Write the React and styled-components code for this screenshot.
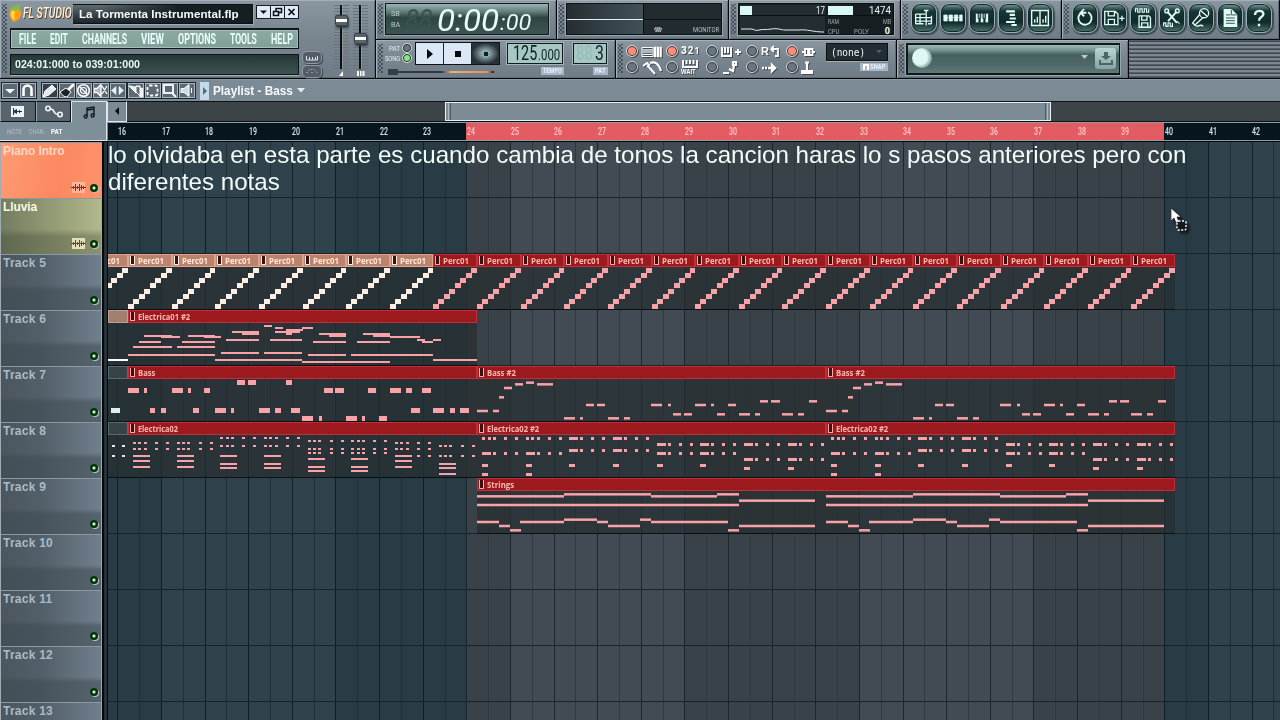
import React, { useLayoutEffect, useRef } from 'react';
import styled, { createGlobalStyle, css } from 'styled-components';

const BAR = 43.63;
const FIRST_BAR = 15;
const SEL_START = 24;
const SEL_END = 40;

// stretches or squeezes a label so that it takes exactly w pixels
const Fit = ({ w, children, ...rest }) => {
  const ref = useRef(null);
  useLayoutEffect(() => {
    const el = ref.current;
    el.style.transform = `scaleX(${w / el.offsetWidth})`;
  }, [w, children]);
  return (
    <FitBox $w={w} {...rest}>
      <FitText ref={ref}>{children}</FitText>
    </FitBox>
  );
};

const FitBox = styled.span`
  display: inline-block;
  flex: none;
  width: ${(p) => p.$w}px;
  white-space: pre;
`;

const FitText = styled.span`
  display: inline-block;
  transform-origin: 0 0;
`;

/* ---------- note data, in thirds of a pixel: [x, y, width] ---------- */

const row = (y, ...spans) => spans.map(([a, b]) => [a, y, b - a]);

const electrica01 = [
  ...row(48, [492, 516]),
  ...row(55, [525, 550], [606, 640]),
  ...row(60, [558, 610]),
  ...row(65, [395, 477], [525, 600]),
  ...row(71, [427, 477], [558, 575], [656, 738], [788, 870]),
  ...row(77, [132, 215], [264, 345], [688, 738], [820, 870]),
  ...row(81, [182, 240], [312, 362], [870, 960]),
  ...row(89, [378, 477], [510, 606], [950, 975], [1000, 1025]),
  ...row(95, [116, 182], [247, 345], [640, 738], [770, 870], [967, 1000]),
  ...row(110, [99, 215], [231, 345]),
  ...row(128, [362, 477], [492, 606]),
  ...row(134, [84, 345], [624, 738], [754, 1000]),
  ...row(150, [345, 606], [1000, 1131]),
  ...row(157, [606, 870]),
].map(([x, y, w]) => [x - 84, y, w]);

const bass = [
  ...row(49, [411, 436], [444, 468], [558, 576]),
  ...row(73, [84, 117], [132, 142], [215, 248], [263, 273], [312, 330], [672, 698], [706, 732], [804, 828], [869, 902], [918, 936], [967, 993]),
  ...row(133, [150, 166], [182, 198], [280, 297], [345, 378], [393, 402], [476, 510], [525, 543], [574, 600], [934, 960], [1000, 1032], [1050, 1066], [1081, 1107]),
  ...row(157, [606, 640], [656, 666], [738, 771], [786, 796], [836, 861]),
].map(([x, y, w]) => [x - 84, y, w]);

const bass2 = [
  ...row(135, [21, 54], [69, 87]),
  ...row(94, [87, 102]),
  ...row(66, [102, 127]),
  ...row(55, [135, 160], [201, 250]),
  ...row(50, [168, 192]),
  ...row(157, [282, 315], [331, 340], [414, 447], [462, 480]),
  ...row(117, [347, 372], [381, 405], [543, 576], [594, 603], [674, 707], [723, 732], [774, 798]),
  ...row(145, [609, 634], [642, 667], [741, 765], [806, 839], [855, 871], [936, 969], [985, 1002]),
  ...row(106, [871, 896], [904, 930], [1018, 1043]),
].map(([x, y, w]) => [x - 21, y, w]);

const electrica02Bars = [
  { dots: [62, 81], lines: [103, 117, 134] },
  { dots: [62, 81], lines: [103, 117, 134] },
  { dots: [49, 72], lines: [103, 125, 139] },
  { dots: [49, 72], lines: [103, 125, 139] },
  { dots: [58, 81, 94], lines: [112, 134, 148] },
  { dots: [58, 81, 94], lines: [112, 134, 148] },
  { dots: [62, 80, 103], lines: [103, 117, 134] },
  { dots: [72, 103], lines: [125, 139, 157] },
];
const electrica02 = electrica02Bars.flatMap(({ dots, lines }, k) => [
  ...dots.flatMap((y) => [15, 31, 47, 81, 114].map((x) => [x + k * 131, y, 8])),
  ...lines.map((y) => [15 + k * 131, y, 50]),
]);

const electrica022Bars = [
  { full: [49], wide: [94], low: [130, 157] },
  { full: [49], wide: [94], low: [130, 157] },
  { full: [], wide: [49, 85], low: [130] },
  { full: [], wide: [49, 85], low: [130] },
  { full: [], wide: [67, 94], low: [130] },
  { full: [], wide: [67, 94], low: [130] },
  { full: [], wide: [67, 112], low: [139] },
  { full: [], wide: [67, 112], low: [139] },
];
const electrica022 = electrica022Bars.flatMap(({ full, wide, low }, k) => {
  const at = k * 131;
  return [
    ...full.flatMap((y) => [15, 32, 48, 81, 114].map((x) => [x + at, y, 9])),
    ...wide.flatMap((y) => [[15 + at, y, 26], ...[48, 81, 114].map((x) => [x + at, y, 9])]),
    ...low.map((y) => [15 + at, y, 17]),
  ];
});

const stringsHalf = [
  ...row(49, [282, 543], [741, 806]),
  ...row(55, [21, 282], [543, 741]),
  ...row(68, [806, 1035]),
  ...row(81, [21, 806]),
  ...row(125, [282, 381], [511, 543]),
  ...row(132, [21, 87], [151, 282], [381, 414], [543, 774]),
  ...row(144, [87, 120], [414, 511], [806, 1035]),
  ...row(157, [120, 152], [774, 806]),
].map(([x, y, w]) => [x - 21, y, w]);
const strings = [...stringsHalf, ...stringsHalf.map(([x, y, w]) => [x + 1047, y, w])];

const perc = Array.from({ length: 8 }, (_, i) => [i * 16.35, 157 - i * 15.3, 18]);

const percClips = [
  { name: 'Perc01', bars: 1, tone: 'tan', notes: perc, h: 5, cut: 23.6 },
  ...Array.from({ length: 24 }, (_, i) => ({
    name: 'Perc01',
    bars: 1,
    tone: i < 7 ? 'tan' : 'red',
    notes: perc,
    h: 5,
  })),
];

const tail = (tone, notes, h) => ({ tone, notes, h, width: 20 });

const tracks = [
  { name: 'Piano Intro', tone: 'orange', wave: true, clips: [] },
  { name: 'Lluvia', tone: 'olive', wave: true, clips: [] },
  { name: 'Track 5', clips: percClips },
  {
    name: 'Track 6',
    clips: [tail('tanFaded', [[0, 150, 60]], 2), { name: 'Electrica01 #2', bars: 8, notes: electrica01, h: 2 }],
  },
  {
    name: 'Track 7',
    clips: [
      tail('slate', [[10, 133, 26]], 5),
      { name: 'Bass', bars: 8, notes: bass, h: 5 },
      { name: 'Bass #2', bars: 8, notes: bass2, h: 2.5 },
      { name: 'Bass #2', bars: 8, notes: bass2, h: 2.5 },
    ],
  },
  {
    name: 'Track 8',
    clips: [
      tail('slate', [[11, 72, 8], [43, 72, 8], [11, 103, 8], [43, 103, 8]], 2),
      { name: 'Electrica02', bars: 8, notes: electrica02, h: 2 },
      { name: 'Electrica02 #2', bars: 8, notes: electrica022, h: 3 },
      { name: 'Electrica02 #2', bars: 8, notes: electrica022, h: 3 },
    ],
  },
  { name: 'Track 9', clips: [{ name: 'Strings', bars: 16, notes: strings, h: 2.5, offset: 369 }] },
  { name: 'Track 10', clips: [] },
  { name: 'Track 11', clips: [] },
  { name: 'Track 12', clips: [] },
  { name: 'Track 13', clips: [] },
];

const noteColors = { tan: '#fdeee4', tanFaded: '#ffffff', slate: '#dcecf8', red: '#f9a2a7' };

const nameWidths = {
  Perc01: 26,
  Bass: 17,
  'Bass #2': 29,
  Strings: 27,
  Electrica02: 40,
  'Electrica01 #2': 52,
  'Electrica02 #2': 52,
};

const Clip = ({ clip }) => {
  const tone = clip.tone || 'red';
  const width = clip.width || clip.bars * BAR;
  // whole heights sit on the pixel grid, the others stay soft
  const snap = (y) => (Number.isInteger(clip.h) ? Math.round(y) : y);
  return (
    <ClipBox $width={width} $cut={clip.cut || 0} $offset={clip.offset || 0}>
      <ClipHead $tone={tone}>
        {clip.name && (
          <>
            <ClipMark $tone={tone} />
            <Fit w={nameWidths[clip.name]}>{clip.name}</Fit>
          </>
        )}
      </ClipHead>
      <ClipNotes width={Math.ceil(width)} height="41">
        {clip.notes.map(([x, y, w], i) => (
          <rect
            key={i}
            x={Math.round(x / 3)}
            y={snap(y / 3 - clip.h / 2) - 13}
            width={Math.max(2, Math.round(w / 3))}
            height={clip.h}
            fill={noteColors[tone]}
          />
        ))}
      </ClipNotes>
    </ClipBox>
  );
};

/* ---------- toolbar drawings ---------- */

const roundIcons = {
  playlist: <path d="M3 8h11M3 12h18M3 16h18M3 8v11M8 8v11M21 10v9M3 19h9M17 19h4M15 4v17M12.500 4h5" />,
  steps: <path d="M2 9h4v7H2zM8 9h4v7H8zM14 9h4v7h-4zM20 9h3v7h-3zM2 12h21" fill="currentColor" strokeWidth=".7" />,
  piano: <path d="M5 7h4v11H5zM10.500 7h4v11h-4zM16 7h4v11h-4zM8 7h3v6H8zM13.500 7h3v6h-3z" fill="currentColor" stroke="#14302f" strokeWidth=".9" />,
  browser: <path d="M7 5h10M11 9h6M11 13h7M7 17h10M13 20.500h6" strokeWidth="2.400" />,
  mixer: <path d="M3 4h19v17H3zM12.500 4v17M6.500 18v-4M9.500 18v-7M16 18v-4M19 18v-8" strokeWidth="1.600" />,
  undo: <path d="M7 7.500a7.500 7.500 0 1 0 9-1.500M7 6.500h7M11.500 2.500l-4 4 4 4" strokeWidth="2.100" />,
  save: (
    <>
      <path d="M2 5h12l3 3v12H2zM6 5v5h7V5M6 20v-6h7v6" />
      <path d="M18.500 13h6M21.500 10v6" />
    </>
  ),
  render: (
    <>
      <path d="M4 6V2h2.500v4H9V2h2.500v4H14V2h2.500v4H19V2" strokeWidth="1.300" />
      <path d="M8 10h11l2 2v11H8zM11 10v5h6v-5M11 23v-5h7v5" />
    </>
  ),
  scissors: (
    <>
      <path d="M7 5l11 13M18 5L8 16" strokeWidth="2.200" />
      <circle cx="6.500" cy="4.500" r="2.200" />
      <circle cx="18.500" cy="4.500" r="2.200" />
      <path d="M3 22v-4h2.500v4H8v-4h2.500v4H13v-4M18 16l3 3" strokeWidth="1.300" />
    </>
  ),
  mic: (
    <>
      <circle cx="16" cy="7" r="5.200" />
      <path d="M11 8.500L3 18l2.500 2.500L15 12M12 4l8 7M6 21c4 3 5-3 9 1" />
    </>
  ),
  doc: (
    <>
      <path d="M6 3h8l6 6v13H6z" fill="currentColor" />
      <path d="M14 3v6h6M8 9h5M8 12.500h10M8 15.500h10M8 18.500h10" stroke="#1b3d3c" strokeWidth="1" />
    </>
  ),
  help: <path d="M8 9c0-6 9.500-6 9.500-1 0 4-5 3-5 7.500M12.500 19v3" strokeWidth="2.700" />,
};

const RoundIcon = ({ name }) => (
  <RoundButton>
    <svg width="22" height="22" viewBox="0 0 25 25" fill="none" stroke="currentColor" strokeWidth="1.500">
      {roundIcons[name]}
    </svg>
  </RoundButton>
);

const toolIcons = {
  menu: <path d="M4 7h10l-5 4.500z" fill="#fff" stroke="none" />,
  magnet: <path d="M4.500 14V7.500a4 4 0 0 1 8 0V14" strokeWidth="2.600" />,
  pencil: <path d="M2 15l2-6 7-6 4 4-7 6zM9 4l4 4" fill="#dfe9ef" strokeWidth="1" />,
  brush: (
    <>
      <path d="M10 8l6-6" strokeWidth="2.800" />
      <path d="M2 10l6-4 5 4-4 5c-3 0-5-2-7-5z" fill="#1c2329" strokeWidth="1" />
    </>
  ),
  mute: (
    <>
      <circle cx="8.500" cy="8.500" r="5.800" strokeWidth="1.600" />
      <circle cx="8.500" cy="8.500" r="3" strokeWidth="1.200" />
      <path d="M5 5l7 7" strokeWidth="1.200" />
    </>
  ),
  silence: <path d="M2 6.500h3l4-4v12l-4-4H2zM10 4l5 8M15 4l-5 8" fill="#aab5bd" strokeWidth="1.300" />,
  slip: <path d="M7 4.500v8L2.500 8.500zM10 4.500v8l4.500-4z" fill="#e7eff4" strokeWidth=".5" />,
  slice: <path d="M1 3l8 8V4h4v11l3 1V6M9 10l5 5" fill="#e7eff4" strokeWidth="1" />,
  select: <rect x="3.500" y="3.500" width="10" height="10" rx="2" strokeWidth="1.800" strokeDasharray="3 2" />,
  zoom: (
    <>
      <rect x="3" y="3" width="9" height="8" strokeWidth="1.800" />
      <path d="M11 11l4 4" strokeWidth="2" />
    </>
  ),
  listen: <path d="M3 6.500h3l5-4v12l-5-4H3zM13.500 6v5" fill="#cfd9e0" strokeWidth="1" />,
};

const ToolIcon = ({ name, active }) => (
  <ToolButton $active={active}>
    <svg width="17" height="17" viewBox="0 0 17 17" fill="none" stroke="#fff">
      {toolIcons[name]}
    </svg>
  </ToolButton>
);

const optionIcons = [
  [
    true,
    <path d="M1 3.500h11v9H1zM2 6h9M2 8h9M2 10.500h9" key="a" />,
    <path d="M13 3h2v10h-2zM16 3h2v10h-2zM19 3h1.500v10H19z" fill="#fff" strokeWidth=".6" key="b" />,
  ],
  [true, null],
  [false, <path d="M1 3v9h9V3M4 3v6M7 3v6M14 8h6M17 5v6" strokeWidth="1.900" key="a" />],
  [false, <path d="M12 6h7v7h-3M12 6l3-3M12 6l3 3" strokeWidth="1.800" key="a" />],
  [true, <path d="M1 8h3M11 8h3M4 5h3v6H4zM8.500 5h3v6h-3zM6 8h3" strokeWidth="1.800" key="a" />],
  [false, <path d="M2 6l4-3 2 2-2 2M7 6l7 8M9 3c5-2 9 1 11 8" strokeWidth="2" key="a" />],
  [false, <path d="M2 0v7h14V0M5.500 0v4M9 0v4M12.500 0v4" strokeWidth="1.900" key="a" />],
  [false, <path d="M2 13h6M8 9l4 2 1-6M12 2h3v3h-3z" strokeWidth="2.200" key="a" />],
  [false, <path d="M1 8h2M4 8h2M7 8h5M11 5l3 3-3 3z" strokeWidth="2.400" key="a" />],
  [false, <path d="M6 3v7M1 11h10v2H1zM4 2.500h4" strokeWidth="2.200" key="a" />],
];

const menuItems = [
  ['FILE', 17, 14],
  ['EDIT', 18, 14],
  ['CHANNELS', 45, 14],
  ['VIEW', 23, 14],
  ['OPTIONS', 38, 14],
  ['TOOLS', 27, 14],
  ['HELP', 22, 0],
];

const Fruit = () => (
  <svg width="14" height="19" viewBox="0 0 14 19">
    <path d="M1 8c1-4 4-4 6-3 4 0 6 3 5 6-1 4-4 6-7 7C2 16 0 12 1 8z" fill="#ff9d14" />
    <path d="M2 9c1-3 3-3 4-2-1 3-1 6 0 9-3-1-5-4-4-7z" fill="#ffd84a" />
    <path d="M1 6c1-3 3-4 6-4 2-2 3-1 4 0-1 1 1 3 1 4-3-1-4-1-6 1-2-2-3-1-5-1z" fill="#79c13e" />
  </svg>
);

const Slider = ({ at, children }) => (
  <SliderBox>
    <SliderTrack $at={at} />
    <svg width="9" height="7" viewBox="0 0 9 7" fill="#fff">{children}</svg>
  </SliderBox>
);

const App = () => {
  const halfBars = Array.from({ length: 56 }, (_, i) => 15.5 + i / 2);
  const bars = Array.from({ length: 28 }, (_, i) => FIRST_BAR + i);

  return (
    <Window>
      <GlobalStyle />
      <Toolbar>
        <MainPanel>
          <Grip />
          <MainColumn>
            <TitleLine>
              <Logo>
                <Fruit />
                <Fit w={49}>FL STUDIO</Fit>
              </Logo>
              <FileName>
                <Fit w={160}>La Tormenta Instrumental.flp</Fit>
              </FileName>
              <WinButtons>
                <svg width="13" height="12"><path d="M3 4.500h7L6.500 8z" fill="#0b1016" /></svg>
                <svg width="13" height="12" fill="none" stroke="#0b1016" strokeWidth="1.500"><path d="M5 5V2.500h5.500v4H8M2.500 5.500h5v4h-5z" /></svg>
                <svg width="13" height="12" stroke="#0b1016" strokeWidth="1.700"><path d="M3.500 3l6 6M9.500 3l-6 6" /></svg>
              </WinButtons>
            </TitleLine>
            <MenuBar>
              {menuItems.map(([label, w, gap]) => (
                <MenuItem key={label} $gap={gap}>
                  <Fit w={w}>{label}</Fit>
                </MenuItem>
              ))}
            </MenuBar>
            <HintBar>
              <Fit w={125}>024:01:000 to 039:01:000</Fit>
            </HintBar>
          </MainColumn>
          <MiniButtons>
            <MiniButton><svg width="14" height="6" stroke="#dbe5ea" fill="none"><path d="M1.500 1v4h11V1M4.500 2v3M7.500 2v3M10.500 2v3" /></svg></MiniButton>
            <MiniButton><svg width="14" height="7" stroke="#dbe5ea" fill="none" strokeDasharray="1 2"><path d="M2 5c1-5 9-5 10 0M7 5V3" /></svg></MiniButton>
          </MiniButtons>
          <Sliders>
            <Slider at={10}><path d="M6 1v5H2z" /></Slider>
            <Slider at={28}><path d="M1 1h2v5H1zM4 1h1.500v5H4zM6.500 1h2v5h-2z" /></Slider>
          </Sliders>
        </MainPanel>

        <PanelRows>
          <PanelRow>
            <Panel $w={181}>
              <Grip />
              <TimeDisplay>
                <TimeFlags>
                  <Fit w={9}>SB</Fit>
                  <Fit w={9}>BA</Fit>
                </TimeFlags>
                <GhostDigits>
                  <Fit w={28}>88</Fit>
                </GhostDigits>
                <TimeDigits>
                  <Fit w={62}>0:00</Fit>
                </TimeDigits>
                <TimeSmall>
                  <Fit w={31}>:00</Fit>
                </TimeSmall>
              </TimeDisplay>
            </Panel>
            <Panel $w={172}>
              <Grip />
              <Scope>
                <ScopeLeft />
                <ScopeRight>
                  <ScopeLine />
                  <ScopeLabel>
                    <svg width="10" height="7" stroke="#aebcbd" fill="none"><path d="M0 4l2-3v5l2-5v5l2-5v5l2-4" /></svg>
                    <Fit w={26}>MONITOR</Fit>
                  </ScopeLabel>
                </ScopeRight>
              </Scope>
            </Panel>
            <Panel $w={172}>
              <Grip />
              <CpuBox>
                <CpuGraph>
                  <CpuTop>
                    <CpuLevel $w={12} />
                    <Fit w={9}>17</Fit>
                  </CpuTop>
                  <svg width="85" height="19" fill="none" stroke="#dfeef0"><path d="M1 13h11c3 1 4 2 7 1 4-1 7 0 12-1 8-1 10 1 14 1h14c8-1 14 2 25 2" /></svg>
                </CpuGraph>
                <CpuStats>
                  <CpuTop>
                    <CpuLevel $w={25} />
                    <Fit w={22}>1474</Fit>
                  </CpuTop>
                  <StatLine><Fit w={11}>RAM</Fit><Fit w={8}>MB</Fit></StatLine>
                  <StatLine><Fit w={11}>CPU</Fit><Fit w={15}>POLY</Fit><PolyCount>0</PolyCount></StatLine>
                </CpuStats>
              </CpuBox>
            </Panel>
            <Panel $w={161}>
              <Grip />
              <RoundRow>
                {['playlist', 'steps', 'piano', 'browser', 'mixer'].map((n) => <RoundIcon key={n} name={n} />)}
              </RoundRow>
            </Panel>
            <Panel $w={218}>
              <Grip />
              <RoundRow>
                {['undo', 'save', 'render', 'scissors', 'mic', 'doc', 'help'].map((n) => <RoundIcon key={n} name={n} />)}
              </RoundRow>
            </Panel>
          </PanelRow>

          <PanelRow>
            <Panel $w={240}>
              <Grip />
              <ModeSwitch>
                <div><Fit w={11}>PAT</Fit><Lamp $size={10} /></div>
                <div><Fit w={15}>SONG</Fit><Lamp $size={10} $on="#84e878" /></div>
                <PitchSlider />
              </ModeSwitch>
              <Transport>
                <PlayButton><svg width="10" height="12"><path d="M2 1l6 5-6 5z" fill="#05090c" /></svg></PlayButton>
                <PlayButton><svg width="8" height="8"><path d="M1 1h6v6H1z" fill="#05090c" /></svg></PlayButton>
                <PlayButton $rec><svg width="10" height="10"><circle cx="5" cy="5" r="3" fill="#0d2026" stroke="#9ac6c4" /></svg></PlayButton>
              </Transport>
              <LcdColumn $gap={6}>
                <Lcd $w={58}>
                  <LcdBig><Fit w={24}>125</Fit></LcdBig>
                  <LcdSmall><Fit w={22}>.000</Fit></LcdSmall>
                </Lcd>
                <Tag><Fit w={19}>TEMPO</Fit></Tag>
              </LcdColumn>
              <LcdColumn $gap={8}>
                <Lcd $w={36}>
                  <LcdGhost><Fit w={17}>88</Fit></LcdGhost>
                  <LcdBig><Fit w={9}>3</Fit></LcdBig>
                </Lcd>
                <Tag><Fit w={11}>PAT</Fit></Tag>
              </LcdColumn>
            </Panel>
            <Panel $w={281}>
              <Grip />
              <OptionGrid>
                {optionIcons.map(([on, ...icon], i) => (
                  <Option key={i}>
                    <Lamp $size={12} $on={on ? '#ff8d78' : undefined} />
                    {i === 1 ? (
                      <CountIn><b>3</b><span>2</span><small>1</small></CountIn>
                    ) : i === 6 ? (
                      <WaitIcon>
                        <svg width="17" height="8" fill="none" stroke="#fff">{icon}</svg>
                        <Fit w={15}>WAIT</Fit>
                      </WaitIcon>
                    ) : i === 3 ? (
                      <StepBack>
                        <b>R</b>
                        <svg width="11" height="14" viewBox="10 1 11 14" fill="none" stroke="#fff">{icon}</svg>
                      </StepBack>
                    ) : (
                      <svg width="22" height="15" viewBox="0 0 22 15" fill="none" stroke="#fff">{icon}</svg>
                    )}
                  </Option>
                ))}
              </OptionGrid>
              <SnapColumn>
                <SnapBox>
                  <Fit w={34}>(none)</Fit>
                  <svg width="7" height="5"><path d="M0 0h6L3 3.500z" fill="#4d5b62" /></svg>
                </SnapBox>
                <Tag>
                  <svg width="8" height="8" fill="none" stroke="#fff" strokeWidth="2"><path d="M2 7V2h4v5" /></svg>
                  <Fit w={16}>SNAP</Fit>
                </Tag>
              </SnapColumn>
            </Panel>
            <Panel $w={232}>
              <Grip />
              <NewsBar>
                <Ball />
                <svg width="9" height="6"><path d="M1 0h7L4.500 4z" fill="#b7cbc9" /></svg>
                <DownloadButton>
                  <svg width="16" height="15" fill="#4b6666"><path d="M6 1h4v4h3L8 9 3 5h3zM1 9h2v3h10V9h2v5H1z" /></svg>
                </DownloadButton>
              </NewsBar>
            </Panel>
            <Stripes />
          </PanelRow>
        </PanelRows>
      </Toolbar>

      <PlaylistBar>
        <ToolIcon name="menu" />
        <ToolIcon name="magnet" />
        <ToolGroup>
          {['pencil', 'brush', 'mute', 'silence', 'slip', 'slice', 'select', 'zoom', 'listen'].map((n, i) => (
            <ToolIcon key={n} name={n} active={i === 0} />
          ))}
        </ToolGroup>
        <TitleFlag><svg width="9" height="16"><path d="M3 4l4 4-4 4z" fill="#4e6c80" /></svg></TitleFlag>
        <Fit w={80}>Playlist - Bass</Fit>
        <svg width="8" height="6"><path d="M0 0h8L4 4.500z" fill="#e6edf2" /></svg>
      </PlaylistBar>

      <NavRow>
        <Tabs>
          <Tab><svg width="15" height="13"><path d="M1 1h13v11H1z" fill="#eef5f9" /><path d="M3.500 3v7M3.500 6.500H12M6.500 4.500l-3 2 3 2zM9.500 5v3" stroke="#27323a" fill="#27323a" /></svg></Tab>
          <Tab><svg width="20" height="13" fill="none" stroke="#f1f6fa" strokeWidth="1.600"><circle cx="4" cy="3.500" r="2.200" /><circle cx="16" cy="9.500" r="2.200" /><path d="M6.500 4c5 0 2 5 7 5.500" /></svg></Tab>
          <Tab $active><svg width="13" height="13" fill="none" stroke="#111a21" strokeWidth="1.400"><path d="M4 10V2l7-1v8M4 4l7-1" /><circle cx="2.600" cy="10.500" r="1.500" /><circle cx="9.600" cy="9.500" r="1.500" /></svg></Tab>
        </Tabs>
        <ScrollArrow><svg width="6" height="9"><path d="M5 0v8L1 4z" fill="#05090c" /></svg></ScrollArrow>
        <ScrollTrack>
          <ScrollThumb />
        </ScrollTrack>
      </NavRow>

      <RulerRow>
        <FocusModes>
          <Fit w={15}>NOTE</Fit>
          <Fit w={15}>CHAN</Fit>
          <ActiveMode><Fit w={11}>PAT</Fit></ActiveMode>
        </FocusModes>
        <Ruler>
          {bars.map((n) => (
            <RulerBar key={n} $selected={n >= SEL_START && n < SEL_END}>
              {n > FIRST_BAR && <Fit w={8}>{n}</Fit>}
            </RulerBar>
          ))}
        </Ruler>
      </RulerRow>

      <Body>
        <TrackList>
          {tracks.map((t) => (
            <TrackHead key={t.name} $tone={t.tone}>
              <span>{t.name}</span>
              <TrackFoot>
                {t.wave && (
                  <svg width="15" height="13">
                    <path d="M1 1h13v11H1z" fill={t.tone === 'olive' ? '#e4dfb8' : '#ffb79c'} />
                    <path d="M0 6.500h15M2.500 5v3M4.500 3v7M6.500 5v3M8.500 3v7M10.500 4v5M12.500 5v3" stroke={t.tone === 'olive' ? '#4f4f38' : '#7a3423'} />
                  </svg>
                )}
                <Led />
              </TrackFoot>
            </TrackHead>
          ))}
        </TrackList>
        <Splitter />
        <Arrangement>
          <Backdrop>
            {halfBars.map((b) => (
              <HalfBar
                key={b}
                $major={Number.isInteger(b)}
                $selected={b >= SEL_START && b < SEL_END}
                $light={Math.floor((Math.floor(b) - 13) / 4) % 2 === 1}
              />
            ))}
          </Backdrop>
          <Lanes>
            {tracks.map((t) => (
              <Lane key={t.name}>
                {t.clips.map((c, i) => <Clip key={i} clip={c} />)}
              </Lane>
            ))}
          </Lanes>
          <Caption>
            <Fit w={1078}>lo olvidaba en esta parte es cuando cambia de tonos la cancion haras lo s pasos anteriores pero con</Fit>
            <Fit w={172}>diferentes notas</Fit>
          </Caption>
        </Arrangement>
      </Body>

      <Pointer width="18" height="26" viewBox="0 0 18 26">
        <path d="M0 0v13l3-3 2 5 3-1-2-5h4z" fill="#fff" stroke="#14191c" strokeWidth=".7" />
        <rect x="6" y="13" width="9" height="9" rx="1.500" fill="#14191c" stroke="#fff" strokeWidth="1.400" strokeDasharray="2 1.500" />
      </Pointer>
    </Window>
  );
};

const GlobalStyle = createGlobalStyle`
  * {
    box-sizing: border-box;
  }
  body {
    margin: 0;
    overflow: hidden;
  }
  svg {
    display: block;
    flex: none;
  }
`;

const Window = styled.div`
  position: relative;
  display: flex;
  flex-direction: column;
  width: 1280px;
  height: 720px;
  overflow: hidden;
  background: #7b8a94;
  font-family: 'Liberation Sans', Arial, sans-serif;
`;

const techFont = css`
  font-family: Roboto, 'Liberation Sans', sans-serif;
`;

const Toolbar = styled.header`
  display: flex;
  flex: none;
  height: 79px;
  border-bottom: 1px solid #05080b;
`;

const panelSkin = css`
  background: linear-gradient(#8b97a0, #78848e 50%, #707c87);
  box-shadow: inset 1px 1px 0 #a4b0b8, inset -1px -1px 0 #5f6b75;
`;

const MainPanel = styled.section`
  ${panelSkin}
  display: flex;
  width: 376px;
  padding-left: 1px;
  border-right: 1px solid #05080b;
`;

const Grip = styled.i`
  flex: none;
  width: 5px;
  margin: 4px 1px 5px 1px;
  background-image: radial-gradient(#46535d 35%, transparent 45%), radial-gradient(#46535d 35%, transparent 45%);
  background-size: 4px 4px;
  background-position: 0 0, 2px 2px;
`;

const MainColumn = styled.div`
  display: flex;
  flex-direction: column;
  width: 290px;
  margin-left: 1px;
`;

const TitleLine = styled.div`
  display: flex;
  height: 28px;
  padding-top: 4px;
`;

const Logo = styled.div`
  ${techFont}
  display: flex;
  z-index: 1;
  width: 64px;
  color: #fff5e2;
  font-size: 14px;
  font-style: italic;
  font-weight: 500;
  line-height: 18px;
  text-shadow: 1px 1px 0 #49301a, 1px 0 0 #b5824a;
`;

const FileName = styled.div`
  width: 180px;
  height: 20px;
  padding-left: 6px;
  border: 1px solid #0b1115;
  border-left: 0;
  background: linear-gradient(90deg, rgba(20, 28, 31, 0) 15%, #151e21 60%), linear-gradient(#616c70, #1b2427);
  box-shadow: 1px 1px 0 #a0abb3;
  color: #f3fbff;
  font-size: 11.5px;
  font-weight: bold;
  line-height: 19px;
`;

const WinButtons = styled.div`
  display: flex;
  gap: 1px;
  height: 14px;
  margin: 1px 0 0 3px;
  padding: 1px;
  background: #141b25;

  svg {
    background: #e0ebf5;
  }
`;

const MenuBar = styled.nav`
  ${techFont}
  display: flex;
  height: 21px;
  margin-left: 1px;
  padding-left: 8px;
  border: 1px solid #10181c;
  border-top-width: 2px;
  background: linear-gradient(#8ea9a4, #80a099);
  box-shadow: inset 0 0 0 1px #a8bdb9;
  color: #e9fffc;
  font-size: 15.5px;
  font-weight: 700;
  line-height: 19px;
`;

const MenuItem = styled.span`
  margin-right: ${(p) => p.$gap}px;
`;

const HintBar = styled.div`
  height: 21px;
  margin: 5px 0 0 1px;
  padding-left: 4px;
  border: 1px solid #0e1518;
  background: linear-gradient(#263735, #3c5350);
  box-shadow: 0 1px 0 #a4afb6;
  color: #e9f8f7;
  font-size: 11px;
  font-weight: bold;
  line-height: 19px;
`;

const MiniButtons = styled.div`
  display: flex;
  flex-direction: column;
  gap: 3px;
  padding: 52px 0 0 4px;
`;

const MiniButton = styled.div`
  display: flex;
  align-items: center;
  justify-content: center;
  width: 18px;
  height: 11px;
  border-radius: 4px;
  background: #525d67;
  box-shadow: 0 0 0 1px #8f9ba4, 1px 1px 1px 1px #38434b;
`;

const Sliders = styled.div`
  display: flex;
  gap: 4px;
  padding: 5px 0 0 13px;
`;

const SliderBox = styled.div`
  display: flex;
  flex-direction: column;
  align-items: center;
  width: 15px;
`;

const SliderTrack = styled.i`
  display: flex;
  justify-content: center;
  width: 15px;
  height: 64px;
  margin-bottom: 1px;
  background: linear-gradient(90deg, transparent 6px, #0a0f13 6px, #0a0f13 8px, #a4aeb6 8px, transparent 9px),
    repeating-linear-gradient(#69757f 0 1px, transparent 1px 3px);

  &::before {
    content: '';
    width: 11px;
    height: 9px;
    margin-top: ${(p) => p.$at}px;
    border: 1px solid #39434a;
    border-radius: 2px;
    background: linear-gradient(#59636a 35%, #fff 35%, #fff 65%, #59636a 65%);
    box-shadow: 1px 2px 2px #323c43;
  }
`;

const PanelRows = styled.div`
  flex: 1;
`;

const PanelRow = styled.div`
  display: flex;
  height: 39px;

  & + & {
    border-top: 1px solid #05080b;
  }
`;

const Panel = styled.section`
  ${panelSkin}
  display: flex;
  flex: none;
  width: ${(p) => p.$w}px;
  padding-left: 1px;
  border-right: 1px solid #05080b;
`;

const TimeDisplay = styled.div`
  display: flex;
  width: 164px;
  height: 32px;
  margin: 3px 0 0 1px;
  padding-left: 5px;
  border: 1px solid #0f181b;
  background: linear-gradient(#9ab5b1, #63807d 25%, #2f4544 45%, #3c5553);
  box-shadow: 0 0 0 1px #97a4ab;
  color: #e6fdfa;
  font-family: Roboto, sans-serif;
  font-style: italic;
`;

const TimeFlags = styled.div`
  display: flex;
  flex-direction: column;
  gap: 2px;
  width: 14px;
  padding-top: 5px;
  color: #b6cbc9;
  font-size: 8px;
  font-style: normal;
  line-height: 9px;
`;

const GhostDigits = styled.div`
  width: 32px;
  color: #395351;
  font-size: 30px;
  line-height: 32px;
`;

const TimeDigits = styled.div`
  width: 63px;
  font-size: 31px;
  line-height: 33px;
`;

const TimeSmall = styled.div`
  font-size: 22px;
  line-height: 38px;
`;

const Scope = styled.div`
  display: flex;
  width: 156px;
  height: 32px;
  margin: 3px 0 0 1px;
  border: 1px solid #0b1115;
  background: #222b2f;
  box-shadow: 0 0 0 1px #97a4ab;
`;

const ScopeLeft = styled.div`
  width: 77px;
  border-right: 1px solid #090d10;
  background: linear-gradient(transparent 15px, #e1f4f5 15px, #e1f4f5 16px, transparent 16px), linear-gradient(90deg, #252f33, #425157);
`;

const ScopeRight = styled.div`
  flex: 1;
  padding-top: 15px;
`;

const ScopeLine = styled.i`
  display: block;
  height: 1px;
  background: #0b1013;
`;

const ScopeLabel = styled.div`
  ${techFont}
  display: flex;
  align-items: center;
  justify-content: space-between;
  height: 14px;
  padding: 4px 2px 0 10px;
  color: #b6c4c5;
  font-size: 7.5px;
`;

const CpuBox = styled.div`
  ${techFont}
  display: flex;
  gap: 3px;
  width: 156px;
  height: 32px;
  margin: 3px 0 0 1px;
  padding: 1px 2px 0 1px;
  border: 1px solid #090e11;
  background: #171f23;
  box-shadow: 0 0 0 1px #97a4ab;
  color: #e4f8f8;
`;

const CpuGraph = styled.div`
  width: 85px;
  background: #242d32;
`;

const CpuTop = styled.div`
  display: flex;
  align-items: center;
  justify-content: space-between;
  height: 11px;
  border-bottom: 1px solid #090e11;
  font-size: 11.5px;
`;

const CpuLevel = styled.i`
  width: ${(p) => p.$w}px;
  height: 9px;
  background: #d9f7f7;
`;

const CpuStats = styled.div`
  flex: 1;
`;

const StatLine = styled.div`
  display: flex;
  align-items: center;
  justify-content: space-between;
  height: 10px;
  color: #9cabad;
  font-size: 7.5px;
`;

const PolyCount = styled.b`
  padding: 0 1px;
  color: #fff;
  font-size: 9px;
`;

const RoundRow = styled.div`
  display: flex;
  gap: 3px;
  padding: 3px 0 0 2px;
`;

const RoundButton = styled.button`
  display: flex;
  align-items: center;
  justify-content: center;
  width: 26px;
  height: 30px;
  padding: 0;
  border: 1px solid #93b0b2;
  border-radius: 9px;
  background: linear-gradient(#7b9a9a, #183634 25%, #0f2b2a 65%, #4e7370);
  box-shadow: inset 0 0 0 1px #14272a, 1px 1px 1px 1px #3f4c55;
  color: #e0fbf8;
`;

const ModeSwitch = styled.div`
  ${techFont}
  width: 29px;
  padding-top: 3px;
  color: #e7eff4;
  font-size: 7.5px;

  div {
    display: flex;
    align-items: center;
    justify-content: flex-end;
    gap: 2px;
    height: 10px;
    padding-right: 1px;
  }
`;

const PitchSlider = styled.i`
  display: block;
  width: 106px;
  height: 6px;
  margin: 6px 0 0 4px;
  background: linear-gradient(90deg, #343e45 0 10px, transparent 10px) 0 0 / 100% 6px no-repeat,
    linear-gradient(90deg, #303a41 50%, #efac76 60%, #e78e58 94%, #131719) 0 2px / 106px 2px no-repeat;
`;

const Lamp = styled.i`
  flex: none;
  width: ${(p) => p.$size}px;
  height: ${(p) => p.$size}px;
  border: 1.5px solid #d1d9df;
  border-radius: 50%;
  background: ${(p) => p.$on || '#6a757e'};
  box-shadow: inset 0 0 0 1px #222b31;
`;

const Transport = styled.div`
  display: flex;
  height: 23px;
  margin: 2px 0 0 2px;
  border: 1px solid #0d1419;
`;

const PlayButton = styled.button`
  display: flex;
  align-items: center;
  justify-content: center;
  width: 28px;
  height: 21px;
  padding: 0;
  border: 0;
  border-right: 1px solid #1b252c;
  background: ${(p) => (p.$rec ? 'radial-gradient(#b9d5d4, #263238 70%)' : '#dbe7f5')};

  &:last-child {
    width: 27px;
    border-right: 0;
  }
`;

const LcdColumn = styled.div`
  display: flex;
  flex-direction: column;
  align-items: flex-end;
  margin: 2px 0 0 ${(p) => p.$gap}px;
`;

const Lcd = styled.div`
  ${techFont}
  display: flex;
  align-items: flex-end;
  justify-content: flex-end;
  width: ${(p) => p.$w}px;
  height: 23px;
  padding: 0 2px 1px 1px;
  border: 2px solid #12191d;
  outline: 1px solid #a5b2b8;
  outline-offset: -1px;
  background: #a5c8c5;
  color: #10201f;
`;

const LcdBig = styled.div`
  font-size: 21px;
  line-height: 18px;
`;

const LcdSmall = styled.div`
  margin-left: 1px;
  font-size: 14px;
  line-height: 14px;
`;

const LcdGhost = styled.div`
  margin-right: 2px;
  color: #96bbb7;
  font-size: 21px;
  line-height: 18px;
`;

const Tag = styled.div`
  ${techFont}
  display: flex;
  align-items: center;
  justify-content: center;
  height: 8px;
  margin-top: 2px;
  padding: 0 2px;
  background: #a7b7c9;
  color: #e9f2fa;
  font-size: 7px;
  font-weight: bold;
`;

const OptionGrid = styled.div`
  display: grid;
  grid-template-columns: repeat(5, 40px);
  grid-template-rows: 16px 16px;
  padding: 3px 0 0 2px;
`;

const Option = styled.div`
  display: flex;
  align-items: center;
  gap: 3px;
  filter: drop-shadow(1px 1px 0 #414c54);
`;

const CountIn = styled.span`
  ${techFont}
  display: flex;
  align-items: baseline;
  gap: 1px;
  color: #fff;
  font-size: 10px;
  font-weight: bold;
  line-height: 12px;

  small {
    font-size: 9px;
  }
`;

const WaitIcon = styled.span`
  color: #fff;
  font-size: 7px;
  font-weight: bold;
  line-height: 7px;
`;

const StepBack = styled.span`
  display: flex;
  align-items: center;
  color: #fff;
  font-size: 11px;
`;

const SnapColumn = styled.div`
  display: flex;
  flex-direction: column;
  align-items: flex-end;
  margin-top: 3px;
`;

const SnapBox = styled.div`
  display: flex;
  align-items: center;
  justify-content: space-between;
  width: 62px;
  height: 18px;
  padding: 0 4px 0 4px;
  border: 1px solid #0b1013;
  background: #222c32;
  box-shadow: 0 1px 0 #a4afb6;
  color: #f2fbff;
  font-family: 'DejaVu Sans Mono', monospace;
  font-size: 10px;
`;

const NewsBar = styled.div`
  display: flex;
  align-items: center;
  width: 214px;
  height: 32px;
  margin: 3px 0 0 1px;
  padding: 0 3px 2px 4px;
  border: 2px solid #0f181b;
  border-right-width: 1px;
  background: linear-gradient(#9ebab6, #728f8d 20%, #455f5e 35%, #526d6b 80%, #617a78);
  box-shadow: 0 0 0 1px #97a4ab;
`;

const Ball = styled.i`
  width: 20px;
  height: 20px;
  margin-right: auto;
  border-radius: 50%;
  background: radial-gradient(circle at 40% 45%, #dff8f5 45%, #769692 75%);
`;

const DownloadButton = styled.div`
  display: flex;
  align-items: center;
  justify-content: center;
  width: 21px;
  height: 21px;
  margin-left: 6px;
  border-radius: 3px;
  background: linear-gradient(#b8d5d2, #86a5a2);
`;

const Stripes = styled.div`
  flex: 1;
  background: repeating-linear-gradient(#545e67 0 1px, #3f484f 1px 2px, #7d8892 2px 4px);
`;

const PlaylistBar = styled.div`
  display: flex;
  align-items: center;
  flex: none;
  height: 22px;
  padding: 0 0 0 1px;
  border-top: 1px solid #8b99a2;
  color: #f6fafc;
  font-size: 12.500px;
  font-weight: bold;

  > svg {
    margin-left: 4px;
  }
`;

const ToolButton = styled.button`
  width: 18px;
  height: 17px;
  padding: 0;
  border: 1px solid #1c262e;
  outline: 1px solid #aab6be;
  outline-offset: -2px;
  background: ${(p) => (p.$active ? '#35404a' : '#5c6974')};
  overflow: hidden;

  svg {
    margin: -1px 0 0 -1px;
  }
`;

const ToolGroup = styled.div`
  display: flex;
  margin-left: 4px;

  button + button {
    margin-left: -0.9px;
  }
`;

const TitleFlag = styled.i`
  width: 9px;
  height: 18px;
  margin: 0 4px 0 4px;
  padding-top: 1px;
  background: #c3dbe9;
`;

const NavRow = styled.div`
  display: flex;
  flex: none;
  height: 21px;
`;

const Tabs = styled.div`
  display: flex;
  width: 107px;
`;

const Tab = styled.div`
  display: flex;
  align-items: center;
  justify-content: center;
  flex: 1;
  border: 1px solid #0c1216;
  border-left: 1px solid #9aa8b1;
  background: #58656f;

  ${(p) =>
    p.$active &&
    css`
      border-color: #dbe6ec;
      border-bottom: 0;
      background: #7f8f9a;
    `}
`;

const ScrollArrow = styled.button`
  display: flex;
  align-items: center;
  justify-content: center;
  width: 20px;
  padding: 0;
  border: 1px solid #dce6ec;
  border-top-color: #0c1216;
  background: #7b8a94;
`;

const ScrollTrack = styled.div`
  flex: 1;
  padding-left: 318px;
  border-top: 1px solid #0c1216;
  border-bottom: 1px solid #0c1216;
  background: #3c4448;
`;

const ScrollThumb = styled.div`
  width: 606px;
  height: 19px;
  border: 1px solid #eaf1f5;
  background: linear-gradient(90deg, transparent 2px, #a9b7c0 2px 3px, transparent 3px 4px, #4e5a62 4px 5px, transparent 5px 599px, #4e5a62 599px 600px, transparent 600px 601px, #a9b7c0 601px 602px, transparent 602px),
    #7b8a94;
`;

const RulerRow = styled.div`
  display: flex;
  flex: none;
  height: 19px;
`;

const FocusModes = styled.div`
  ${techFont}
  display: flex;
  align-items: center;
  gap: 7px;
  width: 107px;
  padding-left: 7px;
  border-right: 1px solid #dbe6ec;
  border-bottom: 1px solid #dbe6ec;
  background: #7f8f9a;
  color: #b0bcc5;
  font-size: 7.5px;
`;

const ActiveMode = styled.span`
  display: flex;
  color: #fff;
  font-weight: bold;
`;

const Ruler = styled.div`
  ${techFont}
  display: flex;
  flex: 1;
  overflow: hidden;
  margin-left: 1px;
  border-top: 1px solid #8f9ca4;
  border-bottom: 1px solid #8f9ca4;
  background: #07161e;
  color: #d6e9f2;
  font-size: 10.500px;
  font-weight: 500;
  line-height: 17px;
`;

const RulerBar = styled.div`
  flex: none;
  width: ${BAR}px;
  padding-left: 0.6px;

  &:first-child {
    margin-left: -34.3px;
  }

  ${(p) =>
    p.$selected &&
    css`
      background: #e25c62;
      color: #ffc6c8;
    `}
`;

const Body = styled.div`
  display: flex;
  flex: 1;
  min-height: 0;
  border-top: 1px solid #05090c;
`;

const TrackList = styled.div`
  width: 102px;
`;

const headTones = {
  orange: css`
    background: linear-gradient(100deg, #ff9a72, #fb8860 60%, #ff936b);
    color: #ffd6c4;
    letter-spacing: -0.1px;
  `,
  olive: css`
    background: linear-gradient(rgba(0, 0, 0, 0) 55%, rgba(50, 58, 40, 0.3) 68%), linear-gradient(90deg, #737c5f, #b1b88c);
    color: #f8f9e2;
    letter-spacing: -0.1px;
  `,
};

const TrackHead = styled.div`
  display: flex;
  flex-direction: column;
  justify-content: space-between;
  height: 56px;
  padding: 1px 3px 4px;
  border-top: 1px solid #8c99a2;
  border-right: 1px solid #9aa7b0;
  border-left: 1px solid #a0acb4;
  background: linear-gradient(rgba(0, 0, 0, 0) 54%, rgba(60, 72, 80, 0.5) 64%), linear-gradient(90deg, #4b565e, #525f69 40%, #707f8c);
  color: #a9bac6;
  font-size: 12px;
  font-weight: bold;
  line-height: 15px;
  letter-spacing: 0.25px;
  ${(p) => headTones[p.$tone]}

  > span {
    margin-left: -1px;
  }
`;

const TrackFoot = styled.div`
  display: flex;
  align-items: center;
  justify-content: flex-end;
  gap: 4px;
  height: 13px;
`;

const Led = styled.i`
  width: 8px;
  height: 8px;
  border-radius: 50%;
  background: radial-gradient(circle, #c8ffc0 1px, #06340d 2px);
  box-shadow: 1px 1px 0 #b6c6bd;
`;

const Splitter = styled.i`
  width: 6px;
  border-right: 1px solid #05090c;
  border-left: 2px solid #05090c;
  background: #273238;
`;

const Arrangement = styled.div`
  display: grid;
  grid-template: 1fr / 1fr;
  flex: 1;
  min-width: 0;
  overflow: hidden;

  > * {
    grid-area: 1 / 1;
    min-width: 0;
    min-height: 0;
  }
`;

const Backdrop = styled.div`
  display: flex;
  margin-left: -12.5px;
`;

const HalfBar = styled.i`
  flex: none;
  width: ${BAR / 2}px;
  border-left: 1px solid ${(p) => (p.$selected ? (p.$major ? '#1d262c' : '#30393f') : p.$major ? '#101e27' : '#203039')};
  background: ${(p) => (p.$selected ? (p.$light ? '#424b53' : '#394248') : p.$light ? '#30424c' : '#293b45')};
`;

const Lanes = styled.div`
  width: 1172px;
`;

const Lane = styled.div`
  display: flex;
  height: 56px;
  border-bottom: 1px solid #17242b;
`;

const ClipBox = styled.div`
  flex: none;
  width: ${(p) => p.$width}px;
  height: 56px;
  margin-left: ${(p) => p.$offset - p.$cut}px;
  overflow: hidden;
  border-bottom: 1px solid #0b1114;
  background: rgba(39, 47, 50, 0.76);
`;

const clipTones = {
  tan: css`
    border-color: #dba68f;
    background: #bd826b;
    color: #ffeadb;
  `,
  tanFaded: css`
    border-color: #bda294;
    background: #a17f70;
  `,
  slate: css`
    border-color: #5b6a70;
    background: #364448;
  `,
  red: css`
    border-color: #c02f3a;
    background: #9c1a1e;
    color: #ffb6b2;
  `,
};

const ClipHead = styled.div`
  display: flex;
  align-items: center;
  gap: 3px;
  height: 13px;
  padding-left: 1px;
  border: 1px solid;
  font-family: 'Open Sans', 'Noto Sans', sans-serif;
  font-size: 9px;
  font-weight: 700;
  line-height: 11px;
  white-space: nowrap;
  ${(p) => clipTones[p.$tone]}
`;

const ClipMark = styled.i`
  flex: none;
  width: 5px;
  height: 9px;
  border: 1px solid ${(p) => (p.$tone === 'tan' ? '#fff0e4' : '#ffaaa8')};
  border-top: 0;
  background: #3a1212;
`;

const ClipNotes = styled.svg`
  overflow: visible;
`;

const Caption = styled.div`
  display: flex;
  flex-direction: column;
  z-index: 1;
  margin-top: -1px;
  color: #f2fdfa;
  font-size: 24px;
  line-height: 27px;
`;

// floats over the lanes with the selection tool badge
const Pointer = styled.svg`
  position: absolute;
  top: 208px;
  left: 1171px;
  filter: drop-shadow(3px 3px 1px rgba(0, 0, 0, 0.55));
`;

export default App;
